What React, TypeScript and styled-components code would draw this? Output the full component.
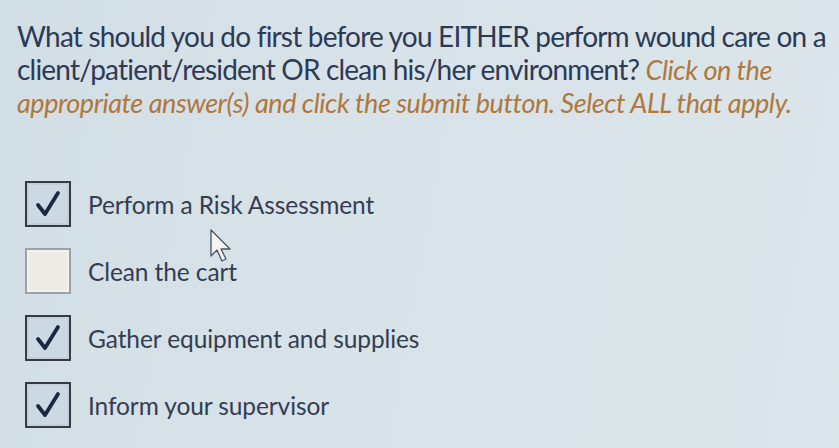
import React from "react";
import styled, { createGlobalStyle } from "styled-components";

const Global = createGlobalStyle`
  html, body { margin: 0; padding: 0; }
  body {
    width: 839px; height: 448px; overflow: hidden;
    background: #d6e1e7;
    font-family: Lato, "Noto Sans", sans-serif;
  }
`;

const Page = styled.div`
  position: relative;
  width: 839px;
  height: 448px;
  box-sizing: border-box;
  padding: 20px 0 0 17px;
  background: linear-gradient(100deg, #d2dee5 0%, #d8e3e9 45%, #dbe5ea 100%);
`;

const Question = styled.div`
  display: flex;
  flex-direction: column;
  font-size: 28px;
  line-height: 33px;
  color: #2d3a56;
  letter-spacing: -0.8px;
  white-space: nowrap;
`;

const Line = styled.div``;

const Instr = styled.em`
  color: #b0773c;
  font-style: italic;
  font-size: 27px;
  letter-spacing: -0.45px;
`;

const Options = styled.div`
  display: flex;
  flex-direction: column;
  gap: 21px;
  margin-top: 62px;
  padding-left: 8px;
`;

const Row = styled.label`
  display: flex;
  align-items: center;
  gap: 17px;
`;

const Box = styled.span<{ $checked: boolean }>`
  width: 46px;
  height: 46px;
  box-sizing: border-box;
  border: 2px solid ${(p) => (p.$checked ? "#353a44" : "#9aa1a8")};
  box-shadow: inset 0 0 0 2px ${(p) => (p.$checked ? "#c3d0dc" : "#f3f2ee")};
  background: ${(p) => (p.$checked ? "#ccd8e3" : "#ecebe6")};
  display: flex;
  align-items: center;
  justify-content: center;
`;

const Label = styled.span`
  font-size: 24.5px;
  color: #343c52;
  letter-spacing: -0.1px;
`;

const Cursor = styled.svg`
  position: absolute;
  left: 209px;
  top: 228px;
`;

const Check = () => (
  <svg width="26" height="28" viewBox="0 0 26 28">
    <path d="M3 15 L10 24 L23 3" fill="none" stroke="#1f2740" strokeWidth="3.8" strokeLinecap="round" strokeLinejoin="round" />
  </svg>
);

const items: [string, boolean][] = [
  ["Perform a Risk Assessment", true],
  ["Clean the cart", false],
  ["Gather equipment and supplies", true],
  ["Inform your supervisor", true],
];

export default function App() {
  return (
    <>
      <Global />
      <Page>
        <Question>
          <Line>What should you do first before you EITHER perform wound care on a</Line>
          <Line>
            client/patient/resident OR clean his/her environment? <Instr>Click on the</Instr>
          </Line>
          <Line>
            <Instr>appropriate answer(s) and click the submit button. Select ALL that apply.</Instr>
          </Line>
        </Question>
        <Options>
          {items.map(([t, c]) => (
            <Row key={t}>
              <Box $checked={c}>{c && <Check />}</Box>
              <Label>{t}</Label>
            </Row>
          ))}
        </Options>
        <Cursor width="26" height="36" viewBox="0 0 26 36">
          <path d="M2 2 L2 28 L8 22 L13 33 L17 31 L12 21 L21 21 Z" fill="#f4f4f2" stroke="#4a5260" strokeWidth="1.3" strokeLinejoin="round" />
        </Cursor>
      </Page>
    </>
  );
}
